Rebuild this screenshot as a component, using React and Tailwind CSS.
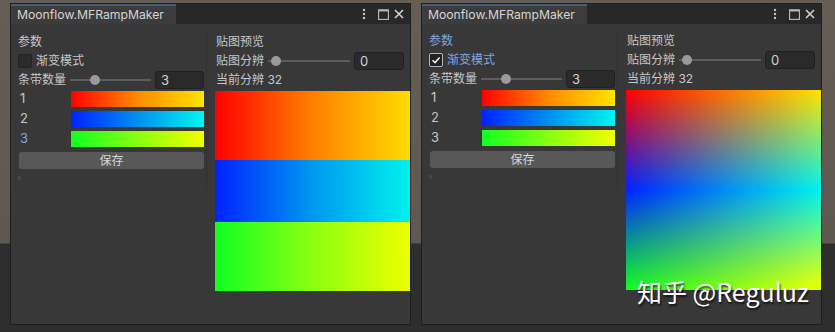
import React from 'react';

const font = "font-['Inter','Noto_Sans_CJK_SC',sans-serif]";

const ramps = [
    { id: '1', bg: 'bg-[linear-gradient(90deg,#ff0000,#ff8a00,#ffe400)]' },
    { id: '2', bg: 'bg-[linear-gradient(90deg,#0022ff,#0090f0,#00f6ee)]' },
    { id: '3', bg: 'bg-[linear-gradient(90deg,#12ff24,#88ff10,#f2ff00)]' },
];

const TabIcons = () => (
    <div className="flex items-center pr-[6px]">
        <svg width="4" height="12" viewBox="0 0 4 12" className="mr-[12px]">
            <circle cx="2" cy="2" r="1.2" fill="#c4c4c4" />
            <circle cx="2" cy="6" r="1.2" fill="#c4c4c4" />
            <circle cx="2" cy="10" r="1.2" fill="#c4c4c4" />
        </svg>
        <svg width="11" height="11" viewBox="0 0 11 11" className="mr-[5px]">
            <rect x="0.6" y="1" width="9.8" height="9.4" fill="none" stroke="#bdbdbd" strokeWidth="1.1" />
            <rect x="0.6" y="0.6" width="9.8" height="1.8" fill="#bdbdbd" />
        </svg>
        <svg width="10" height="10" viewBox="0 0 10 10">
            <path d="M1 1 L9 9 M9 1 L1 9" stroke="#d2d2d2" strokeWidth="1.6" />
        </svg>
    </div>
);

const Slider = ({ children }) => (
    <div className="relative h-[10px] flex-1">
        <div className="absolute left-0 right-0 top-[4px] h-[2px] bg-[#5d5d5d]" />
        {children}
    </div>
);

const Field = ({ value, className }) => (
    <div className={`h-[18px] rounded-[3px] border border-[#202020] bg-[#2a2a2a] pl-[5px] text-[13px] leading-[16px] text-[#d2d2d2] ${className}`}>
        {value}
    </div>
);

// right window preview: 2D blend between the three ramps
const BlendPreview = () => (
    <svg width="195" height="200" viewBox="0 0 195 200" className="block">
        <defs>
            <linearGradient id="ga" x1="0" x2="1" y1="0" y2="0">
                <stop offset="0" stopColor="#ff0000" />
                <stop offset="1" stopColor="#ffe400" />
            </linearGradient>
            <linearGradient id="gb" x1="0" x2="1" y1="0" y2="0">
                <stop offset="0" stopColor="#0022ff" />
                <stop offset="1" stopColor="#00f4ee" />
            </linearGradient>
            <linearGradient id="gc" x1="0" x2="1" y1="0" y2="0">
                <stop offset="0" stopColor="#10ff20" />
                <stop offset="1" stopColor="#f2ff00" />
            </linearGradient>
            <linearGradient id="fade" x1="0" x2="0" y1="0" y2="1">
                <stop offset="0" stopColor="#000" />
                <stop offset="1" stopColor="#fff" />
            </linearGradient>
            <mask id="mtop" maskContentUnits="userSpaceOnUse">
                <rect x="0" y="0" width="195" height="100" fill="url(#fade)" />
            </mask>
            <mask id="mbot" maskContentUnits="userSpaceOnUse">
                <rect x="0" y="100" width="195" height="100" fill="url(#fade)" />
            </mask>
        </defs>
        <rect x="0" y="0" width="195" height="100" fill="url(#ga)" />
        <rect x="0" y="0" width="195" height="100" fill="url(#gb)" mask="url(#mtop)" />
        <rect x="0" y="100" width="195" height="100" fill="url(#gb)" />
        <rect x="0" y="100" width="195" height="100" fill="url(#gc)" mask="url(#mbot)" />
    </svg>
);

const BandPreview = () => (
    <div className="flex w-[195px] flex-col">
        <div className="h-[69px] bg-[linear-gradient(90deg,#ff0000,#ff8000,#ffdc00)]" />
        <div className="h-[62px] bg-[linear-gradient(90deg,#0022ff,#0098f0,#00f2ee)]" />
        <div className="h-[69px] bg-[linear-gradient(90deg,#10ff22,#8cff10,#eeff00)]" />
    </div>
);

const RampWindow = ({ gradientMode }) => (
    <div className={`relative flex h-[322px] w-[401px] flex-col border border-[#1e1e1e] bg-[#383838] ${font}`}>
        {/* Tab bar */}
        <div className="flex h-[20px] items-stretch justify-between bg-[#282828]">
            <div className="flex w-[165px] items-center border-t-2 border-[#46607c] bg-[#3c3c3c] pl-[6px] text-[12.2px] text-[#d4d4d4]">
                Moonflow.MFRampMaker
            </div>
            <TabIcons />
        </div>

        <div className={`flex flex-1 items-start ${gradientMode ? 'pt-[7px]' : 'pt-[8px]'}`}>
            {/* Parameters */}
            <div className="flex w-[197px] flex-col border-r border-[#303030] pb-[10px] pl-[7px] pr-[2px] text-[12px] text-[#c6c6c6]">
                <div className={`flex h-[19px] items-center ${gradientMode ? 'text-[#7ea6e0]' : ''}`}>参数</div>
                <div className="flex h-[19px] items-center gap-[4px]">
                    {gradientMode ? (
                        <div className="flex h-[14px] w-[14px] items-center justify-center rounded-[2px] border border-[#a9b6c6] bg-[#232323]">
                            <svg width="10" height="10" viewBox="0 0 10 10">
                                <path d="M1.5 5.2 L4 7.6 L8.6 2.4" fill="none" stroke="#f2f2f2" strokeWidth="1.5" />
                            </svg>
                        </div>
                    ) : (
                        <div className="h-[14px] w-[14px] rounded-[2px] border border-[#232323] bg-[#2b2b2b]" />
                    )}
                    <span className={gradientMode ? 'text-[#7ea6e0]' : ''}>渐变模式</span>
                </div>
                <div className="flex h-[19px] items-center gap-[4px]">
                    <span className="w-[48px]">条带数量</span>
                    <Slider>
                        <div className="absolute left-[20px] top-0 h-[10px] w-[10px] rounded-full bg-[#9a9a9a]" />
                    </Slider>
                    <Field value="3" className="w-[49px]" />
                </div>
                {ramps.map((r) => (
                    <div key={r.id} className="flex h-[20px] items-center">
                        <span className={`w-[53px] pl-[2px] text-[13px] ${r.id === '3' && !gradientMode ? 'text-[#7ea6e0]' : ''}`}>{r.id}</span>
                        <div className={`h-[16px] flex-1 ${r.bg}`} />
                    </div>
                ))}
                <div className="mt-[3px] ml-[1px] flex h-[17px] items-center justify-center rounded-[3px] bg-[#585858] text-[12px] text-[#d6d6d6]">
                    保存
                </div>
                <div className="mt-[7px] h-[4px] w-[3px] bg-[#454545]" />
            </div>

            {/* Preview */}
            <div className="flex flex-1 flex-col pl-[8px] text-[12px] text-[#c6c6c6]">
                <div className="flex h-[19px] items-center pl-[1px]">贴图预览</div>
                <div className="flex h-[19px] items-center gap-[4px] pl-[1px] pr-[6px]">
                    <span className="w-[48px]">贴图分辨</span>
                    <Slider>
                        <div className="absolute left-[3px] top-0 h-[10px] w-[10px] rounded-full bg-[#9a9a9a]" />
                    </Slider>
                    <Field value="0" className="w-[50px]" />
                </div>
                <div className="flex h-[19px] items-center pl-[1px]">当前分辨 32</div>
                <div className="mt-[2px]">{gradientMode ? <BlendPreview /> : <BandPreview />}</div>
            </div>
        </div>

        {gradientMode && (
            <div className="absolute left-[215px] top-[275px] font-['Noto_Sans_CJK_SC',sans-serif] text-[25px] leading-none text-white [text-shadow:1px_2px_2px_rgba(0,0,0,0.7)]">
                知乎 @Reguluz
            </div>
        )}
    </div>
);

export default function App() {
    return (
        <div className="flex h-[332px] w-[835px] gap-[10px] overflow-hidden bg-[linear-gradient(180deg,#665d55_0px,#5f5851_243px,#2e2e2e_244px,#2e2e2e_100%)] pl-[10px] pt-[3px]">
            <RampWindow gradientMode={false} />
            <RampWindow gradientMode />
        </div>
    );
}
